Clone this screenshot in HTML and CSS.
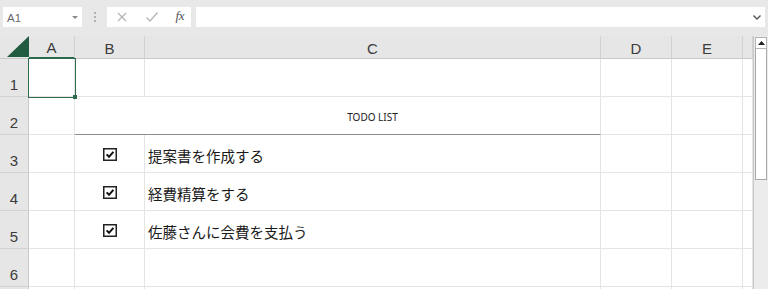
FILE: index.html
```html
<!DOCTYPE html>
<html lang="ja">
<head>
<meta charset="utf-8">
<title>TODO LIST</title>
<link rel="stylesheet" href="styles.css">
</head>
<body>
<div class="app">
  <div class="toolbar">
    <div class="namebox"><span class="ref">A1</span><span class="caret"></span></div>
    <div class="grip"><i></i><i></i><i></i></div>
    <div class="fxbox">
      <svg class="ico" width="12" height="12" viewBox="0 0 12 12"><path d="M2 2 L10 10 M10 2 L2 10" stroke="#b4b4b4" stroke-width="1.2" fill="none"/></svg>
      <svg class="ico" width="14" height="12" viewBox="0 0 14 12"><path d="M1.5 6.5 L5 10 L12.5 1.5" stroke="#b4b4b4" stroke-width="1.3" fill="none"/></svg>
      <span class="fx">fx</span>
    </div>
    <div class="formula">
      <svg class="chev" width="10" height="7" viewBox="0 0 10 7"><path d="M1.5 1.5 L5 5 L8.5 1.5" stroke="#555" stroke-width="1.4" fill="none"/></svg>
    </div>
  </div>
  <div class="sheet">
    <div class="grid">
      <div class="corner"><svg width="22" height="21" viewBox="0 0 22 21"><path d="M22 0 L22 21 L0 21 Z" fill="#215b40"/></svg></div>
      <div class="ch sel">A</div>
      <div class="ch">B</div>
      <div class="ch">C</div>
      <div class="ch">D</div>
      <div class="ch">E</div>
      <div class="ch"></div>

      <div class="rh">1</div>
      <div class="c active"><span class="handle"></span></div>
      <div class="c"></div>
      <div class="c"></div>
      <div class="c"></div>
      <div class="c"></div>
      <div class="c"></div>

      <div class="rh">2</div>
      <div class="c"></div>
      <div class="c merged title">TODO LIST</div>
      <div class="c"></div>
      <div class="c"></div>
      <div class="c"></div>

      <div class="rh">3</div>
      <div class="c"></div>
      <div class="c chk"><svg width="14" height="13" viewBox="0 0 14 13"><rect x="0.75" y="0.75" width="12.5" height="11.5" fill="#fff" stroke="#222" stroke-width="1.5"/><path d="M3.6 6.4 L6 8.8 L10.4 3.8" stroke="#111" stroke-width="2" fill="none"/></svg></div>
      <div class="c task">提案書を作成する</div>
      <div class="c"></div>
      <div class="c"></div>
      <div class="c"></div>

      <div class="rh">4</div>
      <div class="c"></div>
      <div class="c chk"><svg width="14" height="13" viewBox="0 0 14 13"><rect x="0.75" y="0.75" width="12.5" height="11.5" fill="#fff" stroke="#222" stroke-width="1.5"/><path d="M3.6 6.4 L6 8.8 L10.4 3.8" stroke="#111" stroke-width="2" fill="none"/></svg></div>
      <div class="c task">経費精算をする</div>
      <div class="c"></div>
      <div class="c"></div>
      <div class="c"></div>

      <div class="rh">5</div>
      <div class="c"></div>
      <div class="c chk"><svg width="14" height="13" viewBox="0 0 14 13"><rect x="0.75" y="0.75" width="12.5" height="11.5" fill="#fff" stroke="#222" stroke-width="1.5"/><path d="M3.6 6.4 L6 8.8 L10.4 3.8" stroke="#111" stroke-width="2" fill="none"/></svg></div>
      <div class="c task">佐藤さんに会費を支払う</div>
      <div class="c"></div>
      <div class="c"></div>
      <div class="c"></div>

      <div class="rh">6</div>
      <div class="c"></div>
      <div class="c"></div>
      <div class="c"></div>
      <div class="c"></div>
      <div class="c"></div>
      <div class="c"></div>

      <div class="rh"></div>
      <div class="c"></div>
      <div class="c"></div>
      <div class="c"></div>
      <div class="c"></div>
      <div class="c"></div>
      <div class="c"></div>
    </div>
    <div class="vscroll">
      <div class="up"><svg width="7" height="4" viewBox="0 0 7 4"><path d="M0 4 L3.5 0 L7 4 Z" fill="#222"/></svg></div>
      <div class="thumb"></div>
      <div class="track"></div>
    </div>
  </div>
</div>
</body>
</html>
```

FILE: styles.css
```css
html, body {
  margin: 0;
  padding: 0;
}
body {
  width: 768px;
  height: 289px;
  overflow: hidden;
  background: #e6e6e6;
  font-family: "Liberation Sans", Arial, sans-serif;
}
.app {
  display: flex;
  flex-direction: column;
  height: 289px;
}
.toolbar {
  height: 36px;
  box-sizing: border-box;
  padding: 7px 3px 9px 3px;
  display: flex;
  align-items: stretch;
  background: #e8e8e8;
}
.namebox {
  width: 79px;
  background: #fff;
  display: flex;
  align-items: center;
  justify-content: space-between;
  padding: 0 4px 0 4px;
  box-sizing: border-box;
}
.ref {
  font-size: 11.5px;
  color: #6a6a6a;
  padding-top: 1px;
}
.caret {
  width: 0;
  height: 0;
  border-left: 3px solid transparent;
  border-right: 3px solid transparent;
  border-top: 3px solid #8a8a8a;
}
.grip {
  width: 25px;
  display: flex;
  flex-direction: column;
  align-items: center;
  justify-content: center;
  gap: 2px;
}
.grip i {
  width: 2px;
  height: 2px;
  background: #b0b0b0;
  display: block;
}
.fxbox {
  width: 84px;
  background: #fff;
  display: flex;
  align-items: center;
  justify-content: space-between;
  padding: 0 7px 0 9px;
  box-sizing: border-box;
}
.fx {
  font-family: "Liberation Serif", "Times New Roman", serif;
  font-style: italic;
  font-size: 13px;
  color: #505050;
  letter-spacing: -0.5px;
  padding-bottom: 2px;
}
.formula {
  flex: 1;
  margin-left: 5px;
  background: #fff;
  display: flex;
  align-items: center;
  justify-content: flex-end;
  padding-right: 3px;
}
.sheet {
  flex: 1;
  display: flex;
  overflow: hidden;
}
.grid {
  display: grid;
  grid-template-columns: 29px 46px 70px 456px 71px 71px 10px;
  grid-template-rows: 23px repeat(6, 38px) 20px;
  background: #fff;
}
.corner {
  background: #e6e6e6;
  display: flex;
  align-items: flex-end;
  justify-content: flex-end;
  padding: 0 0 1px 0;
  border-bottom: 1px solid #c9c9c9;
  box-sizing: border-box;
}
.ch {
  background: #e6e6e6;
  border-right: 1px solid #d2d2d2;
  border-bottom: 1px solid #c9c9c9;
  box-sizing: border-box;
  display: flex;
  align-items: center;
  justify-content: center;
  font-size: 15px;
  color: #3c3c3c;
  padding-top: 2px;
}
.ch.sel {
  border-bottom: 2px solid #2b6a4b;
}
.rh {
  background: #e6e6e6;
  border-bottom: 1px solid #d2d2d2;
  border-right: 1px solid #c9c9c9;
  box-sizing: border-box;
  display: flex;
  align-items: flex-end;
  justify-content: center;
  padding-bottom: 3px;
  font-size: 15px;
  color: #3c3c3c;
}
.c {
  border-right: 1px solid #e4e4e4;
  border-bottom: 1px solid #e4e4e4;
  box-sizing: border-box;
  display: flex;
  align-items: center;
  position: relative;
}
.c.active {
  outline: 1.5px solid #2e6b4d;
  outline-offset: 0;
  z-index: 2;
}
.handle {
  position: absolute;
  right: -3px;
  bottom: -3px;
  width: 4px;
  height: 4px;
  background: #2e6b4d;
}
.merged {
  grid-column: span 2;
}
.title {
  justify-content: center;
  padding-left: 70px;
  font-family: "Noto Sans", "Liberation Sans", sans-serif;
  font-size: 10px;
  color: #222;
  border-bottom: 1px solid #8c8c8c;
  padding-top: 2px;
}
.chk {
  justify-content: center;
  padding-top: 2px;
}
.task {
  padding-left: 3px;
  padding-top: 3px;
  font-family: "Noto Sans CJK JP", "Noto Sans", sans-serif;
  font-size: 14.5px;
  color: #1a1a1a;
}
.vscroll {
  width: 15px;
  background: #ececec;
  border-left: 1px solid #c8c8c8;
  box-sizing: border-box;
  display: flex;
  flex-direction: column;
  padding: 1px 1px 0 1px;
}
.up {
  height: 12px;
  background: #fff;
  border: 1px solid #b4b4b4;
  box-sizing: border-box;
  display: flex;
  align-items: center;
  justify-content: center;
}
.thumb {
  height: 131px;
  background: #fff;
  border: 1px solid #a8a8a8;
  border-top: none;
  box-sizing: border-box;
}
.track {
  flex: 1;
}
```
